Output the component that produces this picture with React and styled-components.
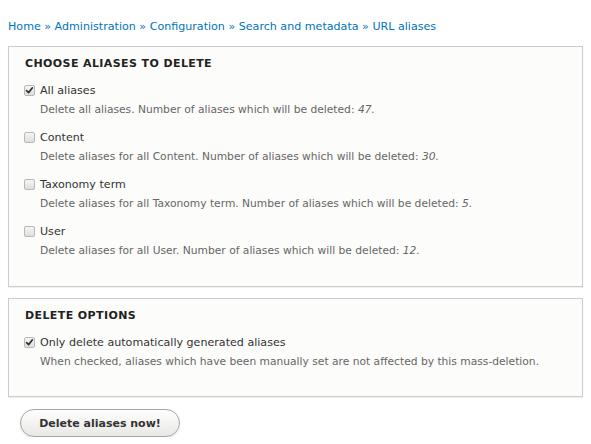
import React from 'react';
import { styled, createGlobalStyle } from 'styled-components';

const GlobalStyle = createGlobalStyle`
  html, body {
    margin: 0;
    padding: 0;
    background: #ffffff;
  }
  body {
    font-family: "DejaVu Sans", "Liberation Sans", sans-serif;
    color: #333;
  }
`;

const crumbs = ['Home', 'Administration', 'Configuration', 'Search and metadata', 'URL aliases'];

const aliasOptions = [
  { label: 'All aliases', text: 'Delete all aliases. Number of aliases which will be deleted:', count: 47, checked: true },
  { label: 'Content', text: 'Delete aliases for all Content. Number of aliases which will be deleted:', count: 30 },
  { label: 'Taxonomy term', text: 'Delete aliases for all Taxonomy term. Number of aliases which will be deleted:', count: 5 },
  { label: 'User', text: 'Delete aliases for all User. Number of aliases which will be deleted:', count: 12 }
];

const Checkbox = ({ checked }) => (
  <St.Box>
    {checked && (
      <svg width="9" height="9" viewBox="0 0 9 9">
        <path d="M1.6 4.6 L3.6 6.6 L7.4 1.8" fill="none" stroke="#333" strokeWidth="1.7" strokeLinecap="round" strokeLinejoin="round" />
      </svg>
    )}
  </St.Box>
);

const Option = ({ label, checked, children }) => (
  <St.Item>
    <St.LabelRow>
      <Checkbox checked={checked} />
      <St.Label>{label}</St.Label>
    </St.LabelRow>
    <St.Description>{children}</St.Description>
  </St.Item>
);

const App = () => {
  return (
    <St.Page>
      <GlobalStyle />
      <St.Breadcrumb>
        {crumbs.map((c, i) => (
          <React.Fragment key={c}>
            {i > 0 && <St.Sep> » </St.Sep>}
            <St.Link href="#">{c}</St.Link>
          </React.Fragment>
        ))}
      </St.Breadcrumb>

      <St.Fieldset>
        <St.Legend>Choose aliases to delete</St.Legend>
        <St.Items>
          {aliasOptions.map((o) => (
            <Option key={o.label} label={o.label} checked={o.checked}>
              {o.text} <em>{o.count}.</em>
            </Option>
          ))}
        </St.Items>
      </St.Fieldset>

      <St.Fieldset $small>
        <St.Legend>Delete options</St.Legend>
        <St.Items>
          <Option label="Only delete automatically generated aliases" checked>
            When checked, aliases which have been manually set are not affected by this mass-deletion.
          </Option>
        </St.Items>
      </St.Fieldset>

      <St.Button type="button">Delete aliases now!</St.Button>
    </St.Page>
  );
};

export default App;

const St = {
  Page: styled.div`
    padding: 19px 8px 0 8px;
  `,

  Breadcrumb: styled.div`
    font-size: 11.1px;
    line-height: 16px;
    color: #0074bd;
    white-space: nowrap;
  `,

  Link: styled.a`
    color: #0074bd;
    text-decoration: none;
  `,

  Sep: styled.span`
    color: #0074bd;
  `,

  Fieldset: styled.div`
    margin-top: 11px;
    border: 1px solid #cccccc;
    background-color: #fcfcfa;
    padding: 10px 15px ${(p) => (p.$small ? '24px' : '25px')} 15px;
    box-shadow: 0 1px 1px rgba(0, 0, 0, 0.06);
  `,

  Legend: styled.div`
    padding-left: 1px;
    font-size: 11px;
    line-height: 14px;
    font-weight: bold;
    text-transform: uppercase;
    letter-spacing: 0.4px;
    color: #222;
  `,

  Items: styled.div`
    margin-top: 9px;
    display: flex;
    flex-direction: column;
    gap: 7px;
  `,

  Item: styled.div`
    display: flex;
    flex-direction: column;
  `,

  LabelRow: styled.div`
    display: flex;
    align-items: center;
    height: 20px;
    gap: 5px;
  `,

  Box: styled.span`
    width: 11px;
    height: 11px;
    box-sizing: border-box;
    border: 1px solid #b8b8b8;
    border-radius: 2px;
    background: linear-gradient(#f6f6f6, #dedede);
    display: flex;
    align-items: center;
    justify-content: center;
    flex-shrink: 0;
  `,

  Label: styled.span`
    font-size: 11.1px;
    color: #333;
  `,

  Description: styled.div`
    padding-left: 16px;
    font-size: 10.7px;
    line-height: 20px;
    color: #666;

    em {
      font-style: italic;
    }
  `,

  Button: styled.button`
    margin: 12px 0 0 12px;
    width: 160px;
    height: 28px;
    border: 1px solid #a6a6a6;
    border-radius: 20px;
    background: linear-gradient(#fefefe, #e8e8e4);
    font-family: "DejaVu Sans", "Liberation Sans", sans-serif;
    font-size: 11px;
    font-weight: bold;
    color: #333;
    cursor: pointer;
    box-shadow: 0 1px 2px rgba(0, 0, 0, 0.1);
  `
};
